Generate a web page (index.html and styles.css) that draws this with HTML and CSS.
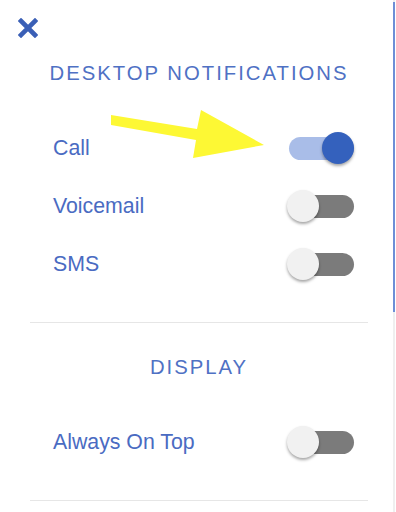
FILE: index.html
```html
<!DOCTYPE html>
<html lang="en">
<head>
  <meta charset="UTF-8" />
  <meta name="viewport" content="width=device-width, initial-scale=1.0"/>
  <title>Settings</title>
  <link rel="stylesheet" href="styles.css">
</head>
<body>
  <div class="panel">
    <div class="close-bar">
      <button class="close" aria-label="Close">
        <svg width="20" height="20" viewBox="0 0 20 20">
          <path d="M3 3 L17 17 M17 3 L3 17" stroke="#3a5fb6" stroke-width="4.6" stroke-linecap="square" fill="none"/>
        </svg>
      </button>
    </div>

    <!-- desktop notifications -->
    <section class="section first">
      <h2 class="heading">DESKTOP NOTIFICATIONS</h2>
      <div class="row">
        <span class="label">Call</span>
        <span class="toggle on"><span class="track"></span><span class="thumb"></span></span>
      </div>
      <div class="row">
        <span class="label">Voicemail</span>
        <span class="toggle"><span class="track"></span><span class="thumb"></span></span>
      </div>
      <div class="row">
        <span class="label">SMS</span>
        <span class="toggle"><span class="track"></span><span class="thumb"></span></span>
      </div>
    </section>

    <!-- display -->
    <section class="section">
      <h2 class="heading">DISPLAY</h2>
      <div class="row">
        <span class="label">Always On Top</span>
        <span class="toggle"><span class="track"></span><span class="thumb"></span></span>
      </div>
    </section>
  </div>

  <div class="scrollbar"><div class="scroll-thumb"></div></div>

  <!-- annotation arrow -->
  <svg class="arrow" width="396" height="512" viewBox="0 0 396 512">
    <polygon points="111,115 197,129 201,110 264,145 193,158 196,140 111,125" fill="#fdf834"/>
  </svg>
</body>
</html>
```

FILE: styles.css
```css
* { margin: 0; padding: 0; box-sizing: border-box; }

body {
  height: 512px;
  overflow: hidden;
  display: flex;
  position: relative;
  background: #fff;
  font-family: 'Liberation Sans', Arial, sans-serif;
  color: #4a6bc2;
}

.panel {
  width: 393px;
}

.close-bar {
  height: 47px;
  padding: 18px 0 0 18px;
}

.close {
  display: block;
  width: 20px;
  height: 20px;
  border: none;
  background: none;
  cursor: pointer;
}

.close svg { display: block; }

.section {
  margin: 0 25px 0 30px;
  padding: 32px 0 29px;
  border-bottom: 1px solid #e6e6e6;
}

.section.first {
  padding-top: 14px;
}

.heading {
  height: 24px;
  line-height: 24px;
  margin-bottom: 34px;
  text-align: center;
  font-size: 20.3px;
  font-weight: normal;
  letter-spacing: 2px;
  color: #4f71c4;
}

.row {
  height: 58px;
  display: flex;
  align-items: center;
  justify-content: space-between;
  padding: 0 14px 0 23px;
}

.label {
  font-size: 21.3px;
}

.toggle {
  position: relative;
  width: 67px;
  height: 32px;
}

.track {
  position: absolute;
  top: 5px;
  left: 2px;
  right: 0;
  height: 23px;
  border-radius: 12px;
  background: #7b7b7b;
}

.thumb {
  position: absolute;
  top: 0;
  left: 0;
  width: 32px;
  height: 32px;
  border-radius: 50%;
  background: #f1f1f1;
  box-shadow: 0 2px 3px rgba(0, 0, 0, 0.35);
}

.toggle.on .track { background: #a9bde8; }

.toggle.on .thumb {
  left: auto;
  right: 0;
  background: #3461bd;
}

.scrollbar {
  width: 2px;
  margin-right: 1px;
  background: #efefef;
}

.scroll-thumb {
  height: 310px;
  margin-top: 2px;
  background: #6e8ed6;
}

.arrow {
  position: absolute;
  top: 0;
  left: 0;
  pointer-events: none;
}
```
